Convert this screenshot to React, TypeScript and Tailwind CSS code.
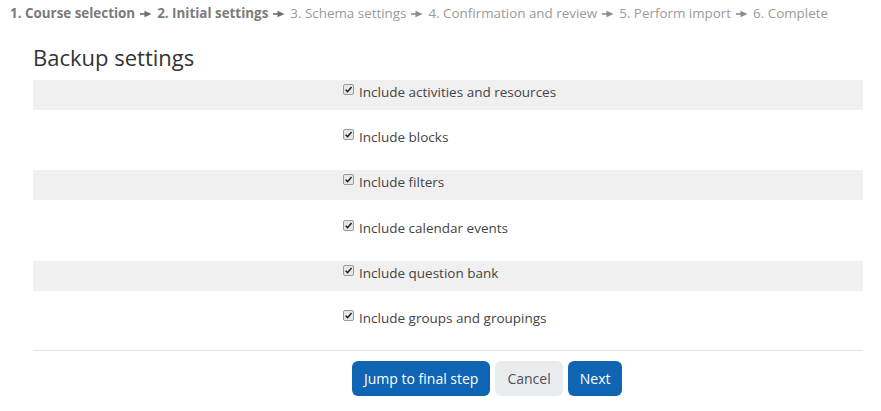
import React from 'react';

// Import wizard – step 2: backup settings

const steps = [
  { label: '1. Course selection', done: true },
  { label: '2. Initial settings', done: true },
  { label: '3. Schema settings', done: false },
  { label: '4. Confirmation and review', done: false },
  { label: '5. Perform import', done: false },
  { label: '6. Complete', done: false },
];

const settings = [
  'Include activities and resources',
  'Include blocks',
  'Include filters',
  'Include calendar events',
  'Include question bank',
  'Include groups and groupings',
];

const CheckBox: React.FC = () => (
  <span className="inline-flex items-center justify-center w-[11px] h-[11px] mr-[5px] mt-[1px] rounded-[2px] border border-[#9a9a9a] bg-[#e6e6e6]">
    <svg viewBox="0 0 10 10" className="w-[9px] h-[9px]">
      <path d="M1.8 5.2 L4 7.4 L8.4 2.2" fill="none" stroke="#222" strokeWidth="1.7" />
    </svg>
  </span>
);

const Sep: React.FC<{ color: string }> = ({ color }) => (
  <svg viewBox="0 0 12 8" className="w-[12px] h-[8px] mx-[5px] shrink-0">
    <path d="M0 4 H6" stroke={color} strokeWidth="1.6" />
    <path d="M4.5 0.8 L11.5 4 L4.5 7.2 Z" fill={color} />
  </svg>
);

const App: React.FC = () => {
  return (
    <div
      className="w-[881px] h-[411px] bg-white overflow-hidden text-[#373a3c]"
      style={{ fontFamily: '"Open Sans", "Liberation Sans", sans-serif' }}
    >
      {/* Progress bar */}
      <div className="flex items-center pl-[10px] pt-[3px] h-[24px] text-[13.4px] whitespace-nowrap">
        {steps.map((step, i) => (
          <React.Fragment key={step.label}>
            <span className={step.done ? 'font-bold text-[#7b7b7b]' : 'text-[#9a9a9a]'}>{step.label}</span>
            {i < steps.length - 1 && <Sep color={i < 2 ? '#6f6f6f' : '#8c8c8c'} />}
          </React.Fragment>
        ))}
      </div>

      <div className="px-[33px] pr-[18px]">
        <h2 className="mt-[18px] mb-[8px] text-[22px] leading-[30px] text-[#333]">Backup settings</h2>

        {/* Settings rows */}
        <div>
          {settings.map((label, i) => (
            <div key={label} className="mb-[15.2px]">
              <div
                className={`h-[30px] flex items-start pt-[3px] pl-[310px] text-[13.5px] leading-[18px] text-[#444] ${
                  i % 2 === 0 ? 'bg-[#f0f0f0]' : 'bg-white'
                }`}
              >
                <CheckBox />
                <span>{label}</span>
              </div>
            </div>
          ))}
        </div>

        <div className="-mt-[1px] border-t border-[#e3e3e3]" />

        {/* Buttons */}
        <div className="flex gap-[5px] mt-[10px] pl-[319px]">
          <button className="h-[35px] px-[12px] rounded-[6px] bg-[#0f65b3] text-white text-[14px]">
            Jump to final step
          </button>
          <button className="h-[35px] px-[12px] rounded-[6px] bg-[#e9ecef] text-[#495057] text-[14px]">
            Cancel
          </button>
          <button className="h-[35px] px-[12px] rounded-[6px] bg-[#0f65b3] text-white text-[14px]">
            Next
          </button>
        </div>
      </div>
    </div>
  );
};

export default App;
